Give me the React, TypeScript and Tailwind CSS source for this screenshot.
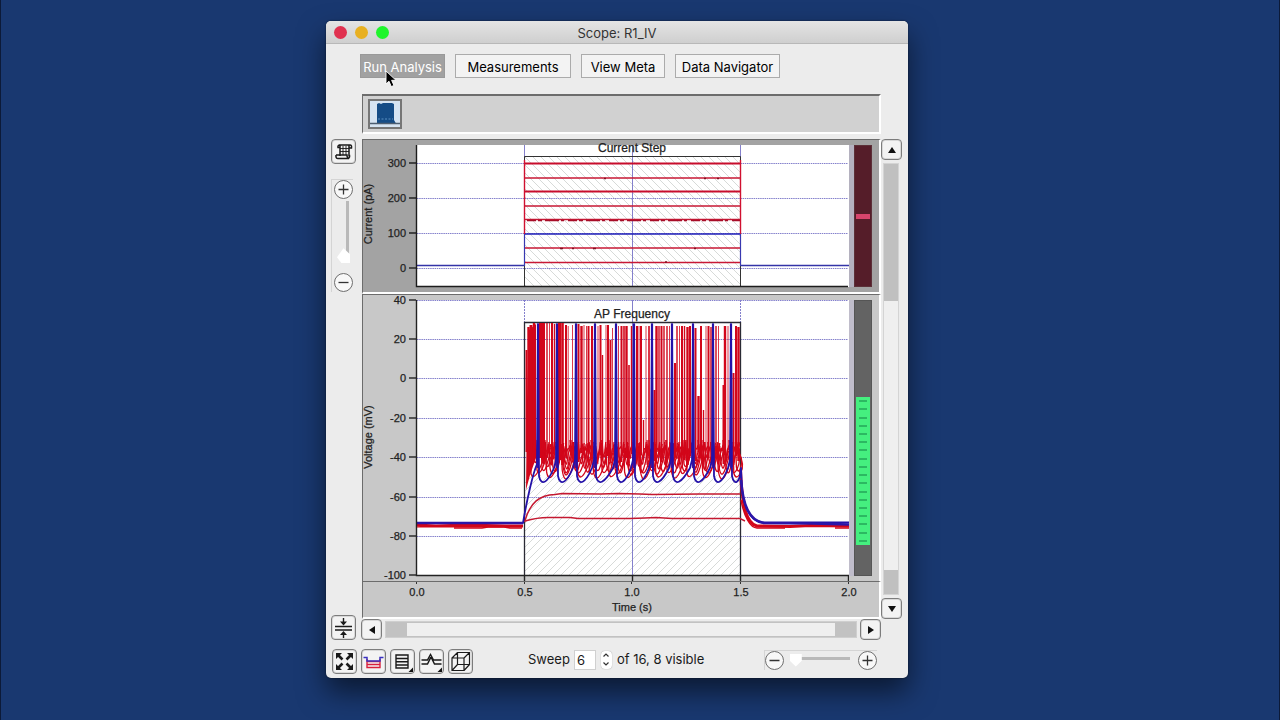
import React, { useState } from "react";
import clsx from "clsx";

const BLUE_SPIKES = [538, 557, 576, 595, 616, 634, 652, 672, 693, 713, 731];

// x, width, top
const RED_SPIKES: [number, number, number][] = [
  [526.5, 2, 350], [528.5, 2.4, 327], [531, 3, 325], [534, 2.4, 323],
  [540.5, 3, 323], [543.5, 3, 323], [547, 1.4, 323], [549.5, 1, 323], [552, 2, 323], [554.5, 1.4, 324],
  [559.5, 3, 323], [562.5, 2.6, 323], [566, 2, 325], [568.2, 1, 326], [570.5, 1.4, 400], [572.5, 1, 325],
  [578.5, 2, 324], [581.5, 2.4, 326], [584, 1, 325], [586.5, 1, 326], [588.5, 2, 326], [592, 2, 326],
  [598, 1, 326], [600.5, 2, 325], [602.5, 1.4, 355], [606, 1, 325], [608, 2, 325], [610.5, 2, 340], [612.5, 1, 328],
  [618.5, 1, 326], [621.5, 2, 326], [624, 1.6, 326], [626.5, 2.4, 326], [629, 1.6, 365], [631.5, 1.4, 326],
  [637, 2, 326], [639, 1, 326], [641, 2, 326], [643.5, 1.4, 420], [646, 1, 326], [649, 1.6, 326],
  [654.5, 2, 390], [656.5, 2.4, 326], [659, 1.4, 326], [661.5, 2, 326], [664, 1.4, 326], [667, 1.4, 326], [669.5, 1, 326],
  [675, 2, 363], [677, 1.4, 326], [679.5, 1, 326], [682, 2, 326], [684.5, 1.4, 326], [687.5, 2.4, 327], [690, 2, 326],
  [695.5, 2, 328], [698.5, 2.4, 396], [701, 2, 326], [703.5, 1.4, 410], [706, 1, 326], [708.5, 2, 326],
  [711, 1.4, 327], [716, 1.4, 326], [718.5, 1, 326], [723.5, 2, 385], [725, 2.4, 326], [728, 1, 326],
  [733.5, 2, 373], [736, 2, 326], [738.5, 2.4, 327],
];

function bluePath() {
  let d = "M416 523 H523 Q526 505 530 488 T537 464";
  BLUE_SPIKES.forEach((x, i) => {
    const next = BLUE_SPIKES[i + 1] ?? 744;
    d += ` L${x} 324 L${x + 1} 476 C${x + 3} 486 ${x + 9} 484 ${next - 3} 468`;
    if (i < BLUE_SPIKES.length - 1) d += ` L${next - 1} 460`;
  });
  return d + " L742 490 C745 512 752 521 762 522.5 H849";
}

// the recovery part of the faster traces, between their spikes
function troughPath(period: number, start: number, low: number) {
  let d = "";
  let n = 0;
  for (let x = start; x < 738; x += period) {
    const end = Math.min(x + period, 739);
    const w = (n * 7) % 5;
    d += `M${x} ${440 + w * 2} L${x + 1} ${low - 6 - w} Q${x + 3} ${low + w} ${x + period / 2} ${low - 8 + w} T${end - 1} ${452 - w} L${end} ${442 + w} `;
    n++;
  }
  return d;
}

const TROUGHS: [number, number, number][] = [
  [15.6, 530, 480], [13, 536, 476], [10.8, 541, 474], [9.2, 545, 470], [7.6, 533, 466], [6.4, 538, 460],
];

const CURRENT_TICKS = [{ v: "300", y: 163 }, { v: "200", y: 198 }, { v: "100", y: 233 }, { v: "0", y: 268 }];
const VOLTAGE_TICKS = [
  { v: "40", y: 300 }, { v: "20", y: 339 }, { v: "0", y: 378 }, { v: "-20", y: 418 },
  { v: "-40", y: 457 }, { v: "-60", y: 497 }, { v: "-80", y: 536 }, { v: "-100", y: 575 },
];
const TIME_TICKS = [{ v: "0.0", x: 417 }, { v: "0.5", x: 525 }, { v: "1.0", x: 632 }, { v: "1.5", x: 741 }, { v: "2.0", x: 849 }];

const chartFont = "font-['Liberation_Sans',Arial,sans-serif]";

function Ticks({ ticks }: { ticks: { v: string; y: number }[] }) {
  return (
    <>
      {ticks.map((t) => (
        <g key={t.v}>
          <line x1="417" x2="848" y1={t.y + 0.5} y2={t.y + 0.5} stroke="#8480cc" strokeDasharray="1.5 .7" />
          <line x1="409" x2="416" y1={t.y} y2={t.y} stroke="#222" strokeWidth="1.4" />
          <text x="406" y={t.y + 3.5} textAnchor="end" fontSize="11" fill="#222" stroke="#222" strokeWidth=".25">{t.v}</text>
        </g>
      ))}
    </>
  );
}

function CurrentChart() {
  return (
    <svg viewBox="363 140 486 152" className={clsx("block min-w-0 flex-1", chartFont)} role="img" aria-label="Current Step">
      <defs>
        <pattern id="hatchDown" width="8" height="8" patternUnits="userSpaceOnUse">
          <path d="M-1 -1 L9 9 M-1 7 L1 9 M7 -1 L9 1" stroke="#d2d6d4" strokeWidth=".9" />
        </pattern>
      </defs>
      <rect x="416" y="145" width="433" height="142" fill="#fff" />
      <rect x="525" y="157" width="215" height="129" fill="url(#hatchDown)" />
      <Ticks ticks={CURRENT_TICKS} />
      {[524.5, 632.5, 740.5].map((x) => (
        <line key={x} x1={x} x2={x} y1="145" y2="286" stroke="#8480cc" />
      ))}
      <text x="372" y="214" transform="rotate(-90 372 214)" textAnchor="middle" fontSize="11" fill="#222" stroke="#222" strokeWidth=".25">Current (pA)</text>
      <text x="632" y="152" textAnchor="middle" fontSize="12" fill="#222" stroke="#222" strokeWidth=".25">Current Step</text>
      <path d="M524.5 286 V156.5 H740.5 V286" fill="none" stroke="#333" />
      <path d="M524.5 160 V234 M740.5 160 V234" stroke="#d01030" strokeWidth="1.4" />
      <path d="M524.5 234 V266 M740.5 234 V266" stroke="#3838b0" strokeWidth="1.2" />
      <path d="M525 163.5 H740 M525 191.5 H740" stroke="#c80d2c" strokeWidth="2.2" />
      <path d="M525 178 H740 M525 206 H740 M525 219.5 H740 M525 248 H740 M525 262.5 H740" stroke="#c81835" strokeWidth="1.5" />
      <path d="M527 220.5 H740" stroke="#a80d28" strokeWidth="1.5" strokeDasharray="9 2 4 3 14 2 3 4" />
      <path d="M604 178.5 h2 M704 178.5 h2 M717 178.5 h2 M560 248.5 h3 M572 248.5 h2 M593 248.5 h3 M694 248.5 h2 M665 262 h2" stroke="#801020" strokeWidth="1.6" />
      <path d="M525 234 H740" stroke="#2020b8" strokeWidth="1.4" />
      <path d="M417 265.5 H524 M741 265.5 H849" stroke="#3434a8" strokeWidth="1.3" />
      <path d="M416.5 145 V286.5 H848" fill="none" stroke="#1c1c1c" strokeWidth="1.4" />
    </svg>
  );
}

function VoltageChart() {
  return (
    <svg viewBox="363 295 486 286" className={clsx("block min-w-0 flex-1", chartFont)} role="img" aria-label="AP Frequency">
      <defs>
        <pattern id="hatchUp" width="8" height="8" patternUnits="userSpaceOnUse">
          <path d="M-1 9 L9 -1 M-1 1 L1 -1 M7 9 L9 7" stroke="#d2d6d4" strokeWidth=".9" />
        </pattern>
      </defs>
      <rect x="416" y="300" width="433" height="276" fill="#fff" />
      <rect x="525" y="475" width="215" height="101" fill="url(#hatchUp)" />
      <Ticks ticks={VOLTAGE_TICKS} />
      {[524.5, 632.5, 740.5].map((x) => (
        <line key={x} x1={x} x2={x} y1="300" y2="576" stroke="#8480cc" strokeDasharray={x === 632.5 ? undefined : "2 1"} />
      ))}
      <text x="372" y="437" transform="rotate(-90 372 437)" textAnchor="middle" fontSize="11" fill="#222" stroke="#222" strokeWidth=".25">Voltage (mV)</text>
      <path d="M524.5 576 V322.5 H740.5 V576" fill="none" stroke="#2a2a34" strokeWidth="1.3" />
      <text x="632" y="318" textAnchor="middle" fontSize="12" fill="#222" stroke="#222" strokeWidth=".25">AP Frequency</text>

      <g fill="none" stroke="#d2061a">
        <path d="M526 490 L527 400 L529 330 L536 324 V458 L530 475 Z" fill="#d2061a" stroke="none" />
        {RED_SPIKES.map(([x, w, top], i) => (
          <path key={x} d={`M${x} ${top} V${452 + ((i * 5) % 14)}`} strokeWidth={w} strokeOpacity={w < 1.2 ? 0.8 : 1} />
        ))}
        {TROUGHS.map(([p, s, low]) => (
          <path key={p} d={troughPath(p, s, low)} strokeWidth="1.3" />
        ))}
        <path d="M524.5 522 C530 502 540 495 555 494.5 L562 493.5 L600 494 L618 493.5 L640 494 L652 494.5 L700 494 H740" stroke="#c41830" strokeWidth="1.5" />
        <path d="M525 521 C532 519 538 517.5 548 517.5 H570 L578 518.5 H630 L645 518 L656 517.5 L672 518.5 H740 L745 521" stroke="#c41830" strokeWidth="1.5" />
        <path d="M416 526 H523 M416 525 l20 1 l30 -1 l40 1 l17 0" strokeWidth="3" />
        <path d="M454 528 h28 l6 -1 h16 l6 1 h12" strokeWidth="1.6" />
        <path d="M740.5 470 C742 508 747 524 757 526 L790 526.5 L810 525.5 L849 526" strokeWidth="3" />
        <path d="M741 500 C744 516 750 528 757 528 H785 M835 528 H849" strokeWidth="1.5" />
      </g>
      <path d={BLUE_SPIKES.map((x) => `M${x} 324 V468`).join(" ")} stroke="#42119a" strokeWidth="2.2" />
      <path d={bluePath()} fill="none" stroke="#2412a8" strokeWidth="1.8" strokeLinejoin="round" />
      <path d="M416 523 H523 M741 480 C743 505 749 521 764 523 L812 523.5 L849 524.5" fill="none" stroke="#2c16a8" strokeWidth="2.6" />
      <path d="M416.5 300 V575.500 H848.500 V581 M524.5 576 v5 M632.5 576 v5 M740.5 576 v5" fill="none" stroke="#222" strokeWidth="1.4" />
    </svg>
  );
}

function TimeAxis() {
  return (
    <svg viewBox="363 583 516 35" className={clsx("block w-full", chartFont)} role="img" aria-label="Time axis">
      {TIME_TICKS.map((t) => (
        <g key={t.v}>
          <line x1={t.x - 0.5} x2={t.x - 0.5} y1="583" y2="585" stroke="#333" />
          <text x={t.x} y="597" textAnchor="middle" fontSize="11" fill="#222" stroke="#222" strokeWidth=".25">{t.v}</text>
        </g>
      ))}
      <text x="632" y="612" textAnchor="middle" fontSize="11" fill="#222" stroke="#222" strokeWidth=".25">Time (s)</text>
    </svg>
  );
}

const squareBtn = "flex shrink-0 items-center justify-center rounded-[4px] border border-[#7c7c7c] bg-[#f3f3f3] shadow-[inset_0_0_0_1px_#d8d8d8]";
const panel = "border-t border-l border-r-2 border-t-[#6c6c6c] border-l-[#6c6c6c] border-r-white";

function IconButton({ label, children }: { label: string; children: React.ReactNode }) {
  return (
    <button aria-label={label} className={clsx(squareBtn, "size-[25px]")}>
      <svg viewBox="0 0 25 25" className="size-[25px] shrink-0" fill="none" stroke="#1a1a1a" strokeWidth="1.4">{children}</svg>
    </button>
  );
}

function ArrowButton({ label, d }: { label: string; d: string }) {
  return (
    <button aria-label={label} className={clsx(squareBtn, "size-[21px]")}>
      <svg viewBox="0 0 20 20" className="size-5 shrink-0" fill="#111"><path d={d} /></svg>
    </button>
  );
}

function RoundButton({ label, plus }: { label: string; plus?: boolean }) {
  return (
    <button aria-label={label} className="flex size-[19px] shrink-0 items-center justify-center rounded-full border border-[#6e6e6e] bg-[#f8f8f8]">
      <svg viewBox="0 0 17 17" className="size-[17px] shrink-0" stroke="#333" strokeWidth="1.3">
        <path d={plus ? "M3.5 8.5 H13.5 M8.5 3.5 V13.5" : "M3.5 8.5 H13.5"} />
      </svg>
    </button>
  );
}

const toolButton = "flex h-6 items-center justify-center border pt-[3px] text-[13px] whitespace-nowrap";
const plainButton = "border-[#ababab] bg-[#f3f3f3] text-black";

export default function App() {
  const [sweep, setSweep] = useState("6");
  const [vZoom, setVZoom] = useState(10);
  const [hZoom, setHZoom] = useState(2);

  const stepSweep = (n: number) => setSweep((s) => String(Math.min(16, Math.max(1, Number(s) + n))));

  return (
    <main className="min-h-screen border-x border-[#0c1a38] bg-[#193870] pt-[21px] pl-[325px] font-['Inter',sans-serif]">
      <section className="w-full max-w-[582px] overflow-hidden rounded-[5px] bg-[#ececec] pb-1 shadow-[0_14px_28px_rgba(0,0,0,0.55),0_0_2px_rgba(0,0,0,0.6)]">
        <header className="grid h-[23px] grid-cols-[1fr_auto_1fr] items-center border-b border-[#b8b8b8] bg-gradient-to-b from-[#e4e4e4] to-[#cfcfcf] px-2">
          <div className="flex gap-2">
            <button aria-label="Close" className="size-[13px] rounded-full bg-[#e0314f]" />
            <button aria-label="Minimize" className="size-[13px] rounded-full bg-[#e8b021]" />
            <button aria-label="Zoom window" className="size-[13px] rounded-full bg-[#1ff52c]" />
          </div>
          <h1 className="pt-[3px] text-[13px] text-[#333]">Scope: R1_IV</h1>
        </header>

        <nav className="flex gap-[10px] pt-[10px] pb-4 pl-[34px]">
          <button className={clsx(toolButton, "relative w-[85px] border-[#999] bg-[#a1a1a1] text-white")}>
            Run Analysis
            <svg viewBox="0 0 12 18" className="absolute top-[15px] left-6 h-[18px] w-3">
              <path d="M1 1 V14 L4 11.2 L6.3 16.6 L8.9 15.4 L6.6 10.3 H11 Z" fill="#000" stroke="#fff" strokeWidth=".9" />
            </svg>
          </button>
          <button className={clsx(toolButton, plainButton, "w-[116px]")}>Measurements</button>
          <button className={clsx(toolButton, plainButton, "w-[84px]")}>View Meta</button>
          <button className={clsx(toolButton, plainButton, "w-[105px]")}>Data Navigator</button>
        </nav>

        <div className="grid grid-cols-[36px_1fr_27px]">
          <div className={clsx(panel, "col-start-2 mb-[5px] h-10 border-t-2 border-b-2 border-b-white bg-[#d1d1d1] pt-[3px] pl-[5px]")}>
            <button aria-label="Series thumbnail" className="block h-[30px] w-[34px] border-2 border-[#767676] bg-[#d6e4f2]">
              <svg viewBox="0 0 30 26" className="block h-[26px] w-[30px]">
                <path d="M7 22.5 V3 L9 2 L11 3 L13 2 H22 L24 3 V19 L26 22.5 Z" fill="#154c86" />
                <path d="M0 22.5 H30" stroke="#4c5d70" strokeWidth="1.5" />
                <path d="M8 18 H23" stroke="#5b8fc0" strokeDasharray="2 1.5" />
              </svg>
            </button>
          </div>

          <div className="col-start-1 flex flex-col justify-between pl-[5px]">
            <div className="flex flex-col items-start">
              <IconButton label="Notes">
                <path d="M8 6 H19 Q21 6 20.5 9 H18 M9 6 V17 M18 6 V17.5 M5 16 H16 Q16 19.5 18 19 Q19 18.5 18.5 16 M5 16 Q4.500 19.500 7 19.500 H18 M9 6 Q6.500 6 7 8.500 H9" strokeWidth="1.5" />
                <path d="M9 9.500 H18 M9 12.500 H18 M12 7 V16 M15 7 V16" strokeWidth=".9" />
              </IconButton>
              <div className="mt-[15px] flex w-[22px] flex-col items-center border-t border-l border-[#d4d4d4] pl-[2px]">
                <RoundButton label="Zoom in vertically" plus />
                <input
                  type="range" min={0} max={60} value={vZoom} aria-label="Vertical zoom"
                  onChange={(e) => setVZoom(Number(e.target.value))}
                  className="my-1 h-[74px] w-4 appearance-none bg-[linear-gradient(#b9b9b9,#b9b9b9)] bg-[length:3px_62px] bg-[position:10px_2px] bg-no-repeat [direction:rtl] [writing-mode:vertical-lr] [&::-webkit-slider-thumb]:h-[15px] [&::-webkit-slider-thumb]:w-[13px] [&::-webkit-slider-thumb]:appearance-none [&::-webkit-slider-thumb]:bg-white [&::-webkit-slider-thumb]:[clip-path:polygon(0_60%,50%_0,100%_40%,100%_100%,35%_100%)]"
                />
                <RoundButton label="Zoom out vertically" />
              </div>
            </div>
            <IconButton label="Collapse axes">
              <path d="M4 11.500 H21 M4 15 H21" />
              <path d="M12.500 3 V8 M12.500 18.500 V23" />
              <path d="M9 6.500 H16 L12.500 10.500 Z M9 20 H16 L12.500 16 Z" fill="#1a1a1a" stroke="none" />
            </IconButton>
          </div>

          <div className="min-w-0">
            <div className={clsx(panel, "flex items-start border-b-2 border-b-white bg-[#a3a3a3]")}>
              <CurrentChart />
              <div className="mt-[5px] h-[142px] w-[5px] bg-[#b4b1bf]" />
              <div className="mt-[5px] flex h-[142px] w-[18px] items-center border border-[#5c3038] bg-[#551d29] px-px">
                <div className="h-[5px] w-full bg-[#d6456c]" />
              </div>
              <div className="w-[7px]" />
            </div>
            <div className={clsx(panel, "flex items-start bg-[#c8c8c8]")}>
              <VoltageChart />
              <div className="mt-[5px] h-[276px] w-[5px] bg-[#c0bdcb]" />
              <div className="mt-[5px] h-[276px] w-[18px] border border-[#555] bg-[#636363] px-px pt-24">
                <div className="flex h-[148px] flex-col items-center justify-around bg-[#45ef7f]">
                  {Array.from({ length: 18 }).map((_, i) => (
                    <div key={i} className="h-[2px] w-2 bg-[#2cb862]" />
                  ))}
                </div>
              </div>
              <div className="w-[7px]" />
            </div>
            <div className={clsx(panel, "border-b-2 border-b-white bg-[#c8c8c8]")}>
              <TimeAxis />
            </div>
            <div className="-ml-px flex items-center gap-[3px]">
              <ArrowButton label="Scroll left" d="M7 10 L13 6 V14 Z" />
              <div className="flex h-[17px] flex-1 border border-[#cfcfcf] bg-[#c2c2c2] p-px" role="scrollbar" aria-valuenow={50}>
                <div className="mx-5 flex-1 bg-[#efefef]" />
              </div>
              <ArrowButton label="Scroll right" d="M13 10 L7 6 V14 Z" />
            </div>
          </div>

          <div className="mb-[21px] flex flex-col items-start gap-[3px]">
            <ArrowButton label="Scroll up" d="M10 7 L14 13 H6 Z" />
            <div className="ml-[2px] flex w-[16px] flex-1 flex-col border border-[#d4d4d4] bg-[#c0c0c0] pt-[137px] pb-6" role="scrollbar" aria-valuenow={50}>
              <div className="flex-1 bg-[#efefef]" />
            </div>
            <ArrowButton label="Scroll down" d="M10 13 L14 7 H6 Z" />
          </div>
        </div>

        <footer className="mt-[9px] flex items-center pl-[6px]">
          <div className="flex gap-1">
            <IconButton label="Expand">
              <path d="M6 6 L10.500 10.500 M19 6 L14.500 10.500 M6 19 L10.500 14.500 M19 19 L14.500 14.500" strokeWidth="2.600" />
              <path d="M4 4 H10 L4 10 Z M21 4 V10 L15 4 Z M4 21 V15 L10 21 Z M21 21 H15 L21 15 Z" fill="#1a1a1a" stroke="none" />
            </IconButton>
            <IconButton label="Sweep overlay">
              <path d="M6 10 V18.500 H19 V10 M6 12.500 H19 M6 15.500 H19" stroke="#d8203c" />
              <path d="M2.500 8.500 H6 V12 H19 V8.500 H22.500" stroke="#3a32c0" strokeWidth="1.500" />
            </IconButton>
            <IconButton label="Sweep list">
              <path d="M6 6 H18 V19 H6 Z M6 9.500 H18 M6 12.700 H18 M6 16 H18" />
              <path d="M23 18.500 V23 H18.500 Z" fill="#111" stroke="none" />
            </IconButton>
            <IconButton label="Trace display">
              <path d="M2.500 11 H8.500 L11.500 5.500 L14.500 11 H22.500 M2.500 15 H8.500 L12 8 L15.500 15 H22.500" strokeWidth="1.500" />
              <path d="M23 18.500 V23 H18.500 Z" fill="#111" stroke="none" />
            </IconButton>
            <IconButton label="3D view">
              <path d="M4 9 H16 V21.500 H4 Z M9.500 3.500 H21.500 V15.500 H9.500 Z M4 9 L9.500 3.500 M16 9 L21.500 3.500 M16 21.500 L21.500 15.500 M4 21.500 L9.500 15.500" strokeWidth="1.200" />
            </IconButton>
          </div>
          <div className="-mt-1 ml-[55px] flex items-center text-[13px] text-[#1a1a1a]">
            <label htmlFor="sweep">Sweep</label>
            <input id="sweep" value={sweep} onChange={(e) => setSweep(e.target.value)} className="ml-1 h-5 w-[22px] border border-[#d0d0d0] bg-white pl-[2px]" />
            <div className="mx-[5px] flex h-[18px] w-[11px] flex-col overflow-hidden rounded-[4px] bg-white shadow-[0_0_1px_#888]">
              <button aria-label="Next sweep" onClick={() => stepSweep(1)} className="flex h-[9px] items-center justify-center">
                <svg viewBox="0 0 8 6" className="h-[6px] w-2" fill="none" stroke="#333" strokeWidth="1.200"><path d="M1.500 4.500 L4 2 L6.500 4.500" /></svg>
              </button>
              <button aria-label="Previous sweep" onClick={() => stepSweep(-1)} className="flex h-[9px] items-center justify-center">
                <svg viewBox="0 0 8 6" className="h-[6px] w-2" fill="none" stroke="#333" strokeWidth="1.200"><path d="M1.500 1.500 L4 4 L6.500 1.500" /></svg>
              </button>
            </div>
            <span>of 16, 8 visible</span>
          </div>
          <div className="-mt-1 mr-[31px] ml-auto flex h-5 items-center border-t border-l border-[#d4d4d4]">
            <RoundButton label="Zoom out horizontally" />
            <input
              type="range" min={0} max={60} value={hZoom} aria-label="Horizontal zoom"
              onChange={(e) => setHZoom(Number(e.target.value))}
              className="mx-1 h-4 w-[66px] appearance-none bg-[linear-gradient(#b9b9b9,#b9b9b9)] bg-[length:60px_3px] bg-[position:2px_5px] bg-no-repeat [&::-webkit-slider-thumb]:h-[13px] [&::-webkit-slider-thumb]:w-3 [&::-webkit-slider-thumb]:appearance-none [&::-webkit-slider-thumb]:bg-white [&::-webkit-slider-thumb]:[clip-path:polygon(0_0,100%_0,100%_55%,50%_100%,0_55%)]"
            />
            <RoundButton label="Zoom in horizontally" plus />
          </div>
        </footer>
      </section>
    </main>
  );
}
